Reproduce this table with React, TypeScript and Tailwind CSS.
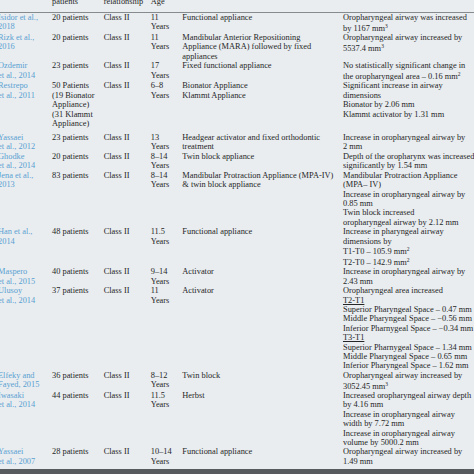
import React from "react";

type Line = React.ReactNode;
type Row = { a: Line[]; b: Line[]; c: Line[]; d: Line[]; e: Line[]; f: Line[]; extra?: boolean };

const S = ({ n }: { n: string }) => <sup className="text-[5.5px]">{n}</sup>;
const SL = ({ children }: { children: React.ReactNode }) => (
  <span className="block pt-[1.3px]">{children}</span>
);
const U = ({ t }: { t: string }) => <span className="underline underline-offset-1">{t}</span>;

const rows: Row[] = [
  {
    a: ["Isidor et al.,", "2018"],
    b: ["20 patients"],
    c: ["Class II"],
    d: ["11", "Years"],
    e: ["Functional appliance"],
    f: ["Oropharyngeal airway was increased", <SL>by 1167 mm<S n="3" /></SL>],
  },
  {
    a: ["Rizk et al.,", "2016"],
    b: ["20 patients"],
    c: ["Class II"],
    d: ["11", "Years"],
    e: ["Mandibular Anterior Repositioning", "Appliance (MARA) followed by fixed", "appliances"],
    f: ["Oropharyngeal airway increased by", <SL>5537.4 mm<S n="3" /></SL>],
  },
  {
    a: ["Ozdemir", "et al., 2014"],
    b: ["23 patients"],
    c: ["Class II"],
    d: ["17", "Years"],
    e: ["Fixed functional appliance"],
    f: ["No statistically significant change in", <SL>the oropharyngeal area – 0.16 mm<S n="2" /></SL>],
  },
  {
    a: ["Restrepo", "et al., 2011"],
    b: ["50 Patients", "(19 Bionator", "Appliance)", "(31 Klammt", "Appliance)"],
    c: ["Class II"],
    d: ["6–8", "Years"],
    e: ["Bionator Appliance", "Klammt Appliance"],
    f: ["Significant increase in airway", "dimensions", "Bionator by 2.06 mm", "Klammt activator by 1.31 mm"],
    extra: true,
  },
  {
    a: ["Yassaei", "et al., 2012"],
    b: ["23 patients"],
    c: ["Class II"],
    d: ["13", "Years"],
    e: ["Headgear activator and fixed orthodontic", "treatment"],
    f: ["Increase in oropharyngeal airway by", "2 mm"],
  },
  {
    a: ["Ghodke", "et al., 2014"],
    b: ["20 patients"],
    c: ["Class II"],
    d: ["8–14", "Years"],
    e: ["Twin block appliance"],
    f: ["Depth of the oropharynx was increased", "significantly by 1.54 mm"],
  },
  {
    a: ["Jena et al.,", "2013"],
    b: ["83 patients"],
    c: ["Class II"],
    d: ["8–14", "Years"],
    e: ["Mandibular Protraction Appliance (MPA-IV)", "& twin block appliance"],
    f: [
      "Mandibular Protraction Appliance",
      "(MPA– IV)",
      "Increase in oropharyngeal airway by",
      "0.85 mm",
      "Twin block increased",
      "oropharyngeal airway by 2.12 mm",
    ],
  },
  {
    a: ["Han et al.,", "2014"],
    b: ["48 patients"],
    c: ["Class II"],
    d: ["11.5", "Years"],
    e: ["Functional appliance"],
    f: [
      "Increase in pharyngeal airway",
      "dimensions by",
      <SL>T1-T0 – 105.9 mm<S n="2" /></SL>,
      <SL>T2-T0 – 142.9 mm<S n="2" /></SL>,
    ],
  },
  {
    a: ["Maspero", "et al., 2015"],
    b: ["40 patients"],
    c: ["Class II"],
    d: ["9–14", "Years"],
    e: ["Activator"],
    f: ["Increase in oropharyngeal airway by", "2.43 mm"],
  },
  {
    a: ["Ulusoy", "et al., 2014"],
    b: ["37 patients"],
    c: ["Class II"],
    d: ["11", "Years"],
    e: ["Activator"],
    f: [
      "Oropharyngeal area increased",
      <U t="T2-T1" />,
      "Superior Pharyngeal Space – 0.47 mm",
      "Middle Pharyngeal Space – −0.56 mm",
      "Inferior Pharnygeal Space – −0.34 mm",
      <U t="T3-T1" />,
      "Superior Pharnygeal Space – 1.34 mm",
      "Middle Pharyngeal Space – 0.65 mm",
      "Inferior Pharyngeal Space – 1.62 mm",
    ],
  },
  {
    a: ["Elfeky and", "Fayed, 2015"],
    b: ["36 patients"],
    c: ["Class II"],
    d: ["8–12", "Years"],
    e: ["Twin block"],
    f: ["Oropharyngeal airway increased by", <SL>3052.45 mm<S n="3" /></SL>],
  },
  {
    a: ["Iwasaki", "et al., 2014"],
    b: ["44 patients"],
    c: ["Class II"],
    d: ["11.5", "Years"],
    e: ["Herbst"],
    f: [
      "Increased oropharyngeal airway depth",
      "by 4.16 mm",
      "Increase in oropharyngeal airway",
      "width by 7.72 mm",
      "Increase in oropharyngeal airway",
      "volume by 5000.2 mm",
    ],
  },
  {
    a: ["Yassaei", "et al., 2007"],
    b: ["28 patients"],
    c: ["Class II"],
    d: ["10–14", "Years"],
    e: ["Functional appliance"],
    f: ["Oropharyngeal airway increased by", "1.49 mm"],
  },
];

const Cell = ({ lines, className = "" }: { lines: Line[]; className?: string }) => (
  <div className={"whitespace-nowrap " + className}>
    {lines.map((l, i) => (
      <div key={i}>{l}</div>
    ))}
  </div>
);

const gridCls = "grid grid-cols-[54px_51.7px_47px_31.6px_160.7px_1fr]";

export default function App() {
  return (
    <div
      className="w-[474px] h-[474px] overflow-hidden bg-[#e9edf0] text-[#262626] text-[8.4px] leading-[9.4px] flex flex-col"
      style={{ fontFamily: '"Liberation Serif", "Times New Roman", serif' }}
    >
      <div className="w-[476px] -ml-[2px] flex flex-col flex-1">
        <div className={gridCls + " -mt-[3.5px] pb-[6px] border-b-[1.5px] border-[#868b8e]"}>
          <div />
          <div>patients</div>
          <div>relationship</div>
          <div>Age</div>
          <div />
          <div />
        </div>
        <div className="flex-1 flex flex-col">
          {rows.map((r, i) => (
            <div key={i} className={gridCls + (r.extra ? " pb-[4.7px]" : "")}>
              <Cell lines={r.a} className="text-[#5a9fd0]" />
              <Cell lines={r.b} />
              <Cell lines={r.c} />
              <Cell lines={r.d} />
              <Cell lines={r.e} />
              <Cell lines={r.f} />
            </div>
          ))}
        </div>
        <div className="h-[5px] bg-[#575b5e] shrink-0" />
      </div>
    </div>
  );
}
